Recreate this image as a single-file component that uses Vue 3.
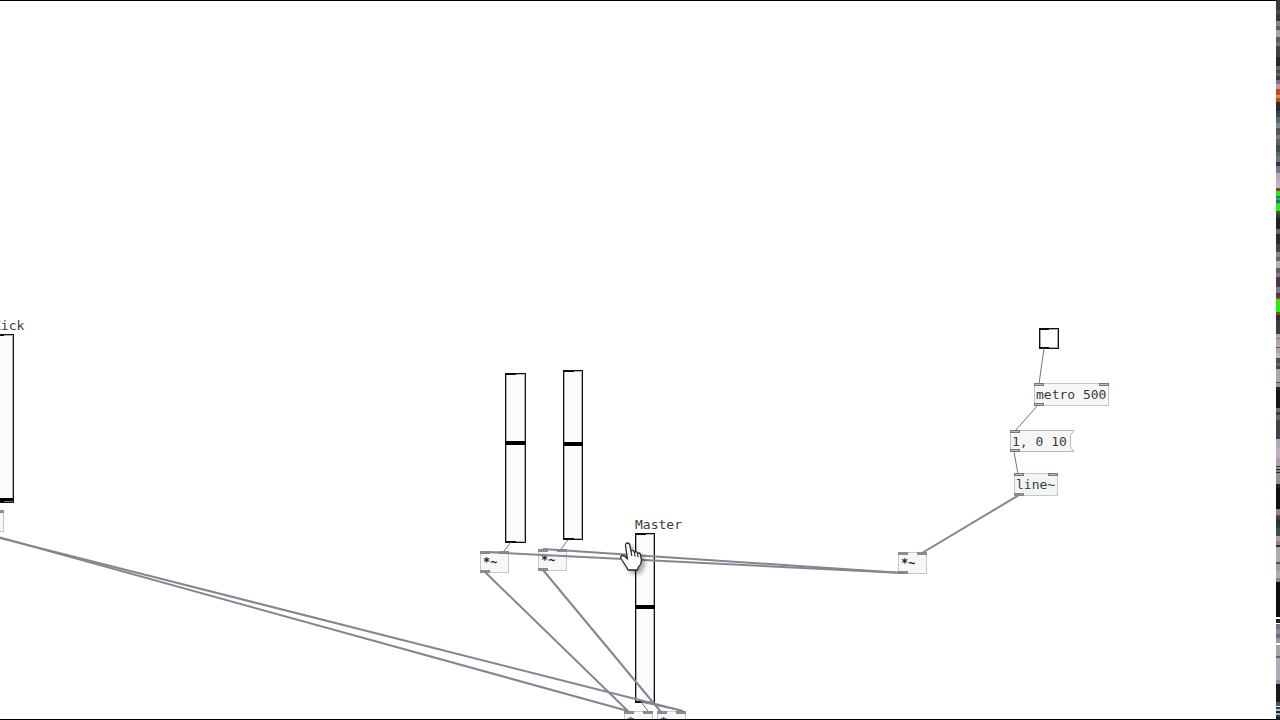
<script setup>
import { ref } from 'vue'

const at = (n) => ({ left: n.x + 'px', top: n.y + 'px', width: n.w + 'px', height: n.h + 'px' })

const sliders = ref([
  { id: 'kick', label: 'Kick', x: -7, y: 334, w: 21, h: 169, value: 0 },
  { id: 'left', label: '', x: 505, y: 373, w: 21, h: 170, value: 59 },
  { id: 'right', label: '', x: 563, y: 370, w: 20, h: 170, value: 57 },
  { id: 'master', label: 'Master', x: 635, y: 533, w: 20, h: 170, value: 57 },
])

const objects = [
  { text: 'metro 500', x: 1034, y: 383, w: 75, h: 23, kind: 'control' },
  { text: 'line~', x: 1014, y: 473, w: 44, h: 23, kind: 'control mixed' },
  { text: '*~', x: 898, y: 552, w: 29, h: 22, kind: 'signal' },
  { text: '*~', x: 480, y: 551, w: 29, h: 22, kind: 'signal' },
  { text: '*~', x: 538, y: 549, w: 29, h: 22, kind: 'signal' },
  { text: '*~', x: 624, y: 711, w: 29, h: 22, kind: 'signal' },
  { text: '*~', x: 657, y: 711, w: 29, h: 22, kind: 'signal' },
  { text: '', x: -25, y: 510, w: 29, h: 22, kind: 'signal' },
]

const signalCords = [
  [-20, 532, 628, 711],
  [-20, 533, 683, 711],
  [485, 572, 629, 712],
  [543, 570, 661, 712],
  [903, 573, 485, 552],
  [903, 573, 543, 549],
  [1019, 495, 922, 553],
]
const controlCords = [
  [1044, 348, 1039, 384],
  [1038, 405, 1015, 431],
  [1014, 452, 1018, 474],
  [511, 542, 504, 551],
  [568, 540, 561, 549],
  [641, 702, 648, 711],
  [641, 702, 682, 711],
]

// [start, colour] of each stripe, on a scale of 720
const bands = [
  [0, '#3b3c40'], [10, '#48484d'], [14, '#38383c'], [21, '#8b8490'], [26, '#5d5c62'], [30, '#a9a3ad'], [37, '#5b5a60'],
  [42, '#707075'], [46, '#414144'], [57, '#29292b'], [66, '#6c606b'], [70, '#4a464b'], [73, '#6d5f6c'], [76, '#3f3c40'],
  [80, '#8a6d87'], [84, '#bd97b2'], [89, '#e43d12'], [95, '#b4a33c'], [98, '#df3a16'], [102, '#26331c'],
  [106, '#202a38'], [111, '#34464d'], [117, '#5c666b'], [123, '#80868b'], [128, '#515659'], [135, '#777b7e'],
  [139, '#5d6266'], [145, '#444c4a'], [152, '#5d6864'], [156, '#6b7580'], [162, '#30353d'], [166, '#777882'],
  [173, '#b9aab9'], [182, '#c4b3bf'], [188, '#7c432e'], [191, '#22ed10'], [196, '#287c70'], [198, '#25b763'],
  [200, '#276f8b'], [203, '#22f20c'], [211, '#70402b'], [214, '#303c3c'], [218, '#1e2225'], [229, '#68646a'],
  [234, '#272b2d'], [244, '#39494a'], [252, '#8b8790'], [257, '#646369'], [261, '#aeb1b5'], [268, '#625c65'],
  [273, '#857580'], [277, '#473944'], [287, '#87738a'], [293, '#4a3840'], [297, '#a13b1c'], [299, '#1cf309'],
  [312, '#a9371a'], [315, '#26302f'], [320, '#34413f'], [334, '#b3a5b3'], [338, '#867d88'], [339, '#b3a5b3'],
  [347, '#59545b'], [348, '#aaa2ad'], [353, '#bcb9c2'], [358, '#4a4c4d'], [363, '#636568'], [366, '#434648'],
  [369, '#afa3af'], [382, '#514a51'], [383, '#a194a0'], [387, '#232325'], [390, '#151516'], [408, '#6b6d70'],
  [412, '#3c3f40'], [415, '#66696b'], [420, '#3a4544'], [439, '#b5a4b3'], [448, '#c0afbd'], [458, '#ad9cab'],
  [466, '#38343a'], [467, '#9d919d'], [469, '#252328'], [470, '#8d838d'], [472, '#2b292d'], [473, '#978b97'],
  [484, '#301c24'], [488, '#0d0f10'], [509, '#967b91'], [515, '#5a4352'], [517, '#3b3b3d'], [520, '#25302d'],
  [523, '#293e37'], [528, '#385148'], [536, '#aaa1ab'], [541, '#8b858d'], [545, '#2e2b31'], [547, '#b0a6b1'],
  [562, '#59545b'], [564, '#a39ca6'], [571, '#b3a8b3'], [578, '#858388'], [582, '#0d0d0e'], [617, '#ffffff'],
  [619, '#202020'], [623, '#ffffff'], [624, '#77727a'], [629, '#91879a'], [634, '#716878'], [638, '#9f94a4'],
  [643, '#ffffff'], [645, '#aaa3ad'], [656, '#626269'], [658, '#b3a8b5'], [680, '#958b97'], [684, '#17191a'],
  [702, '#515459'], [706, '#e5eef1'], [707, '#213d59'], [709, '#b4c2ce'], [711, '#192832'], [713, '#9cb5c9'],
  [715, '#263e51'], [717, '#1a1c20'],
]
const pct = (y) => (y / 720) * 100
const stops = bands.map(([y, c], i) => `${c} ${pct(y)}% ${pct(i + 1 < bands.length ? bands[i + 1][0] : 720)}%`)
const edge = { backgroundImage: `linear-gradient(${stops.join(',')})` }
</script>

<template>
  <main class="window">
    <section class="patch" aria-label="Patch">
      <div v-for="(o, i) in objects" :key="i" class="object" :class="o.kind" :style="at(o)">
        <span class="text">{{ o.text }}</span>
        <i class="port in"></i><i class="port in end"></i><i class="port out"></i>
      </div>

      <button type="button" class="message">
        <svg viewBox="0 0 65 22" aria-hidden="true">
          <path d="M.5.5H64L60.500 5V17L64 21.500H.5Z" fill="#f6f6f6" stroke="#b9b9b9" />
        </svg>
        <span class="text">1, 0 10</span>
        <i class="port in"></i><i class="port out"></i>
      </button>

      <input class="toggle" type="checkbox" aria-label="Metronome on" />

      <div v-for="s in sliders" :key="s.id" class="fader" :class="s.id" :style="at(s)">
        <label v-if="s.label" :for="s.id">{{ s.label }}</label>
        <input :id="s.id" v-model="s.value" type="range" min="0" max="100" :aria-label="s.label || s.id + ' level'" />
      </div>

      <svg class="cords" aria-hidden="true">
        <line v-for="(c, i) in controlCords" :key="'c' + i" class="thin" :x1="c[0]" :y1="c[1]" :x2="c[2]" :y2="c[3]" />
        <line v-for="(c, i) in signalCords" :key="'s' + i" class="thick" :x1="c[0]" :y1="c[1]" :x2="c[2]" :y2="c[3]" />
      </svg>

      <svg class="pointer" viewBox="0 0 26 32" aria-hidden="true">
        <path
          d="M5.500 3.500Q5.500 1 7.500 1Q9.500 1 9.800 3.500L11 9Q13 7.500 14 9.500L14.500 10.500Q17 8.500 17.500 11.500Q20 10 20.500 13L21.500 18Q21.500 22 18.500 25L17.500 28H8L6.500 25L1 16.500Q0 13.500 2.500 13.500Q5 13.500 7.500 17Z"
          fill="#fff" stroke="#2a2a2a" stroke-width="1.300" stroke-linejoin="round"
        />
        <path d="M11 9L11.800 14M14.500 10.500L15 14.500M17.500 11.500L18 15" fill="none" stroke="#2a2a2a" stroke-width="1.200" />
      </svg>
    </section>
    <div class="edge" :style="edge"></div>
  </main>
</template>

<style>
body {
  margin: 0;
}
</style>

<style scoped>
.window {
  display: grid;
  grid-template-columns: 1fr 4px;
  height: 100vh;
  overflow: hidden;
  background: #fff;
  font: 13px/16px "DejaVu Sans Mono", monospace;
  color: #3a3a3a;
}
.patch {
  position: relative;
  overflow: hidden;
  box-sizing: border-box;
  border-top: 1px solid #000;
  border-bottom: 1px solid #000;
}
/* node coordinates count from the window's top, above the border */
.patch > * {
  margin-top: -1px;
}
.object {
  position: absolute;
  box-sizing: border-box;
  border: 1px solid #c4c8c8;
  background: #f6f7f7;
}
.mixed {
  background: #f1f6f5;
}
.text {
  position: absolute;
  left: 2px;
  top: 3px;
  white-space: pre;
}
.object .text {
  left: 1px;
}
.signal .text {
  left: 2px;
  top: 2px;
  font-size: 12px;
  font-weight: bold;
  color: #222;
}
.port {
  position: absolute;
  box-sizing: border-box;
  width: 10px;
  height: 3px;
  border: 1px solid #777;
  background: #bbb;
}
.port.in {
  left: -1px;
  top: -1px;
}
.port.end {
  left: auto;
  right: -1px;
}
.port.out {
  left: -1px;
  bottom: -1px;
}
.signal .port,
.mixed .out {
  border-color: #8c8c96;
  background: #8c8c96;
}
.message {
  position: absolute;
  left: 1010px;
  top: 430px;
  width: 65px;
  height: 22px;
  padding: 0;
  border: 0;
  background: none;
  font: inherit;
  color: inherit;
}
.message svg {
  display: block;
  width: 100%;
  height: 100%;
}
.message .text {
  top: 4px;
}
.message .port.in {
  left: 0;
  top: 0;
}
.message .port.out {
  left: 0;
  bottom: 0;
}
.toggle {
  position: absolute;
  left: 1039px;
  top: 328px;
  appearance: none;
  box-sizing: border-box;
  width: 20px;
  height: 21px;
  margin: -1px 0 0;
  border: 1px solid #111;
  outline: 1px solid rgba(0, 0, 0, 0.35);
  outline-offset: -2px;
  background:
    linear-gradient(#111, #111) 0 0 / 9px 1px no-repeat,
    linear-gradient(#111, #111) 0 100% / 9px 1px no-repeat,
    #fff;
}
.fader {
  position: absolute;
}
.fader label {
  position: absolute;
  left: 0;
  bottom: 100%;
}
.fader input {
  appearance: none;
  writing-mode: vertical-lr;
  direction: rtl;
  display: block;
  box-sizing: border-box;
  width: 100%;
  height: 100%;
  margin: 0;
  border: 1px solid #111;
  outline: 1px solid rgba(0, 0, 0, 0.3);
  outline-offset: -2px;
  background:
    linear-gradient(#111, #111) 0 0 / 10px 1px no-repeat,
    linear-gradient(#111, #111) 0 100% / 10px 1px no-repeat,
    #fcfcfc;
}
.fader input::-webkit-slider-thumb {
  appearance: none;
  width: 19px;
  height: 4px;
  background: #000;
}
.kick input::-webkit-slider-thumb {
  background: linear-gradient(#aaa, #aaa) 100% 100% / 9px 1px no-repeat #000;
}
.cords {
  position: absolute;
  left: 0;
  top: 0;
  width: 100%;
  height: 100%;
  pointer-events: none;
}
.thin {
  stroke: #777;
  stroke-width: 1px;
}
.thick {
  stroke: #858591;
  stroke-width: 2px;
}
.pointer {
  position: absolute;
  left: 620px;
  top: 542px;
  width: 26px;
  height: 32px;
  overflow: visible;
  filter: drop-shadow(3px 3px 2px rgba(0, 0, 0, 0.35));
  pointer-events: none;
}
</style>
